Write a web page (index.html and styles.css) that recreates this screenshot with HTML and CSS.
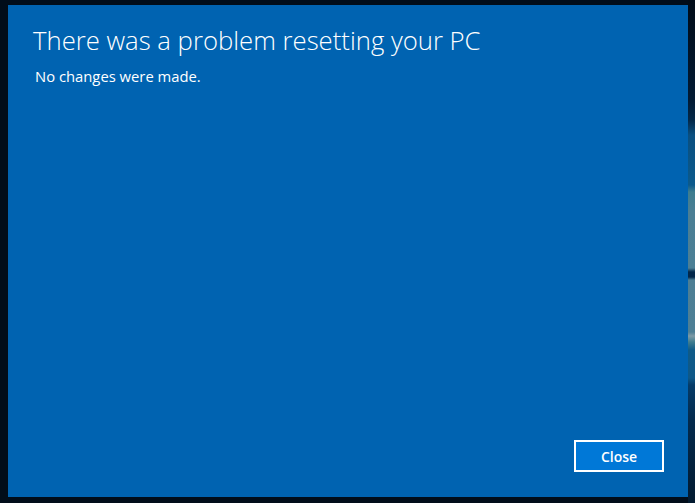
FILE: index.html
```html
<!DOCTYPE html>
<html>
<head>
<meta charset="utf-8">
<link rel="stylesheet" href="styles.css">
</head>
<body>
<div class="dialog">
  <h1 class="title">There was a problem resetting your PC</h1>
  <p class="message">No changes were made.</p>
  <div class="actions">
    <button class="btn">Close</button>
  </div>
</div>
</body>
</html>
```
FILE: styles.css
```css
html, body {
  margin: 0;
  padding: 0;
  width: 695px;
  height: 503px;
  overflow: hidden;
}
body {
  background-color: #010d1a;
  background-image: linear-gradient(to bottom,
    #010c18 0px, #021a33 100px, #032848 120px, #0a4f80 135px, #0b5a8c 185px,
    #3d7d8f 192px, #4a7e94 212px, #4b7f95 268px, #02274a 272px, #02274a 277px,
    #4c7e94 280px, #4d7f95 332px, #7d9aa6 336px, #3f7d8f 342px, #0f5b88 350px,
    #0e5888 378px, #053b68 385px, #032a4d 420px, #021a30 503px);
  background-size: 7px 503px;
  background-position: right top;
  background-repeat: no-repeat;
  font-family: "Open Sans", "Noto Sans", sans-serif;
  display: flex;
}
.dialog {
  box-sizing: border-box;
  width: 680px;
  height: 492px;
  margin: 5px 0 0 8px;
  background: #0063b1;
  color: #ffffff;
  display: flex;
  flex-direction: column;
  padding: 19px 24px 25px 25px;
}
.title {
  margin: 0;
  font-size: 25.7px;
  font-weight: 300;
  line-height: 34px;
  letter-spacing: 0;
}
.message {
  margin: 8px 0 0 2px;
  font-size: 14.8px;
  font-weight: 400;
  line-height: 20px;
}
.actions {
  margin-top: auto;
  display: flex;
  justify-content: flex-end;
}
.btn {
  box-sizing: border-box;
  width: 90px;
  height: 32px;
  background: #0078d7;
  border: 2px solid #ffffff;
  color: #ffffff;
  font-family: "Open Sans", "Noto Sans", sans-serif;
  font-size: 14px;
  font-weight: 600;
  padding: 0;
}
```
